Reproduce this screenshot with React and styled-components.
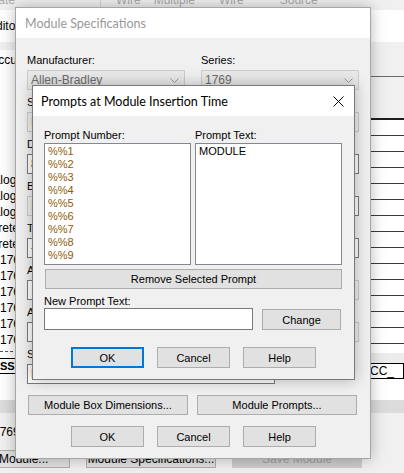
import React from "react";
import styled, { createGlobalStyle } from "styled-components";

const GlobalStyle = createGlobalStyle`
  html, body {
    margin: 0;
    padding: 0;
  }
  body {
    width: 404px;
    height: 473px;
    overflow: hidden;
    background: #f0f0f0;
    font-family: "Liberation Sans", Arial, sans-serif;
    font-size: 11px;
    color: #000;
  }
  * {
    box-sizing: border-box;
  }
`;

/* ---------- the application behind the dialogs ---------- */

const Desk = styled.div`
  position: relative;
  width: 404px;
  height: 473px;
  overflow: hidden;
  display: flex;
  flex-direction: column;
`;

const ColumnHeader = styled.div`
  height: 10px;
  flex: none;
  display: flex;
  overflow: hidden;
  color: #a9a9a9;
  font-size: 12px;
  white-space: nowrap;
`;

const HeaderCell = styled.div`
  flex: none;
  width: ${(p) => (p.$w ? `${p.$w}px` : "auto")};
  margin-left: ${(p) => p.$ml || 0}px;
  line-height: 14px;
  margin-top: -7px;
  border-right: ${(p) => (p.$sep ? "1px solid #d4d4d4" : "none")};
  overflow: hidden;
`;

const TopBand = styled.div`
  height: 32px;
  flex: none;
  background: #fff;
  font-size: 12px;
  line-height: 32px;
  white-space: nowrap;
  overflow: hidden;
`;

const Workspace = styled.div`
  height: 358px;
  flex: none;
  display: flex;
`;

const TreePane = styled.div`
  width: 200px;
  flex: none;
  background: #fff;
  display: flex;
  flex-direction: column;
  white-space: nowrap;
  overflow: hidden;
`;

const TreeHead = styled.div`
  height: 8px;
  background: #f0f0f0;
`;

const TreeRow = styled.div`
  height: 16px;
  line-height: 16px;
  font-size: 12px;
  margin-left: ${(p) => p.$ml || 0}px;
  margin-top: ${(p) => p.$mt || 0}px;
`;

const DashedRow = styled.div`
  height: 8px;
  border-bottom: 1px dashed #555;
  margin-bottom: 6px;
  margin-top: -4px;
`;

const ColumnTitle = styled.div`
  height: 16px;
  line-height: 14px;
  border: 1px solid #000;
  font-size: ${(p) => (p.$bold ? 11 : 12)}px;
  font-weight: ${(p) => (p.$bold ? 700 : 400)};
  padding-left: ${(p) => p.$pl || 0}px;
  margin-left: ${(p) => p.$ml || 0}px;
  background: #fff;
`;

const GridPane = styled.div`
  flex: 1;
  display: flex;
  flex-direction: column;
  background: #fff;
  white-space: nowrap;
`;

const GridTop = styled.div`
  height: 78px;
  background: #f0f0f0;
  border-bottom: 2px solid #1e1e1e;
`;

const GridTopRule = styled.div`
  height: 35px;
  border-bottom: 1px solid #6a6a6a;
`;

const GridRow = styled.div`
  height: 16px;
  border-bottom: 1px solid #3c3c3c;
`;

const GridGap = styled.div`
  height: ${(p) => p.$h}px;
  background: ${(p) => p.$bg || "#fff"};
`;

const StatusBand = styled.div`
  height: 13px;
  flex: none;
  background: #dcdcdc;
`;

const Footer = styled.div`
  flex: 1;
  padding-top: 12px;
  white-space: nowrap;
`;

const FooterText = styled.div`
  line-height: 14px;
  font-size: 12px;
  margin-left: -7px;
`;

const FooterButtons = styled.div`
  display: flex;
  gap: 16px;
  margin-top: 11px;
  margin-left: -50px;
`;

const FooterButton = styled.div`
  width: ${(p) => p.$w || 130}px;
  height: 18px;
  line-height: 16px;
  text-align: center;
  border: 1px solid ${(p) => (p.$disabled ? "#cccccc" : "#adadad")};
  background: ${(p) => (p.$disabled ? "#cccccc" : "#e1e1e1")};
  color: ${(p) => (p.$disabled ? "#a0a0a0" : "#000")};
  font-size: 12px;
`;

/* ---------- dialog windows ---------- */

const Window = styled.div`
  position: absolute;
  left: ${(p) => p.$x}px;
  top: ${(p) => p.$y}px;
  width: ${(p) => p.$w}px;
  height: ${(p) => p.$h}px;
  border: 1px solid ${(p) => (p.$active ? "#7a7a7a" : "#a6a6a6")};
  background: #f0f0f0;
  box-shadow: 0 0 14px rgba(0, 0, 0, 0.28);
  display: flex;
  flex-direction: column;
`;

const TitleBar = styled.div`
  height: 30px;
  flex: none;
  background: #fff;
  display: flex;
  align-items: center;
  justify-content: space-between;
  padding: 0 10px 0 ${(p) => p.$pl}px;
`;

const TitleText = styled.span`
  font-family: Lato, "Liberation Sans", sans-serif;
  font-size: 12.5px;
  color: ${(p) => (p.$active ? "#000" : "#999999")};
`;

const CloseGlyph = () => (
  <svg width="11" height="11" viewBox="0 0 11 11">
    <path d="M0.5 0.5 L10.5 10.5 M10.5 0.5 L0.5 10.5" stroke="#000" strokeWidth="1" />
  </svg>
);

const Chevron = styled.svg`
  position: absolute;
  right: 5px;
  top: 7px;
`;

const WindowBody = styled.div`
  flex: 1;
  padding: ${(p) => p.$pad};
  display: flex;
  flex-direction: column;
`;

/* Module Specifications parts */

const FieldGrid = styled.div`
  display: grid;
  grid-template-columns: 158px 158px;
  column-gap: 16px;
  row-gap: 5px;
`;

const Field = styled.div`
  display: flex;
  flex-direction: column;
  grid-column: ${(p) => (p.$wide ? "1 / span 2" : "auto")};
`;

const FieldLabel = styled.div`
  line-height: 14px;
  height: 14px;
  margin-bottom: ${(p) => (p.$tight ? 0 : 3)}px;
  margin-top: ${(p) => p.$mt || 0}px;
  white-space: nowrap;
`;

const ValueBox = styled.div`
  position: relative;
  width: ${(p) => (p.$w ? `${p.$w}px` : "100%")};
  height: 20px;
  line-height: 18px;
  padding-left: 3px;
  border: 1px solid ${(p) => (p.$disabled ? "#cccccc" : "#7a7a7a")};
  background: ${(p) => (p.$combo ? "#e9e9e9" : p.$disabled ? "#f0f0f0" : "#fff")};
  color: ${(p) => (p.$disabled ? "#6d6d6d" : "#000")};
  white-space: nowrap;
  overflow: hidden;
  font-size: 12px;
`;

const ButtonRow = styled.div`
  display: flex;
  justify-content: ${(p) => p.$justify || "flex-start"};
  gap: ${(p) => p.$gap}px;
  margin-top: ${(p) => p.$mt}px;
  margin-left: ${(p) => p.$ml || 0}px;
`;

const PushButton = styled.div`
  width: ${(p) => p.$w}px;
  height: ${(p) => p.$h || 21}px;
  flex: none;
  display: flex;
  align-items: center;
  justify-content: center;
  margin-top: ${(p) => p.$mt || 0}px;
  background: #e1e1e1;
  border: ${(p) => (p.$default ? "2px solid #0078d7" : "1px solid #adadad")};
  font-size: 11px;
  white-space: nowrap;
`;

/* Prompts dialog parts */

const ListGrid = styled.div`
  display: grid;
  grid-template-columns: 147px 147px;
  column-gap: 4px;
`;

const ListColumn = styled.div`
  display: flex;
  flex-direction: column;
`;

const ListBox = styled.div`
  height: 122px;
  margin-top: 1px;
  border: 1px solid #828790;
  background: #fff;
  padding: 1px 3px;
`;

const ListItem = styled.div`
  line-height: 13px;
  font-size: 11px;
  color: ${(p) => p.$color || "#000"};
`;

const InputRow = styled.div`
  display: flex;
  align-items: flex-start;
  gap: 9px;
`;

const TextInput = styled.div`
  width: 209px;
  height: 22px;
  border: 1px solid #7a7a7a;
  background: #fff;
`;

const specFields = [
  { label: "Short Name:", value: "DI", disabled: true },
  { label: "Catalog Number:", value: "", disabled: true },
  { label: "Description:", value: "8 Channel Analog Input" },
  { label: "Revision:", value: "" },
  { label: "Bus Type:", value: "I/O", disabled: true },
  { label: "Slot Type:", value: "" },
  { label: "Type:", value: "-" },
  { label: "Class:", value: "" },
  { label: "Address Format:", value: "" },
  { label: "Input Size:", value: "", disabled: true },
  { label: "Alias:", value: "" },
  { label: "Output Size:", value: "", disabled: true },
];

const prompts = ["%%1", "%%2", "%%3", "%%4", "%%5", "%%6", "%%7", "%%8", "%%9"];

const treeRows = [
  { text: "Analog Input", ml: -21 },
  { text: "Analog Output", ml: -21 },
  { text: "Analog Combo", ml: -21 },
  { text: "Discrete Input", ml: -25 },
  { text: "Discrete Output", ml: -25 },
  { text: "1769-IF4", ml: 0 },
  { text: "1769-IF8", ml: 0 },
  { text: "1769-OF4", ml: 0 },
  { text: "1769-OF8", ml: 0 },
  { text: "1769-IQ16", ml: 0 },
  { text: "1769-OB16", ml: 0 },
];

const ComboChevron = () => (
  <Chevron width="9" height="5" viewBox="0 0 9 5">
    <path d="M0.5 0.5 L4.5 4.5 L8.5 0.5" fill="none" stroke="#9a9a9a" strokeWidth="1" />
  </Chevron>
);

const App = () => {
  return (
    <>
      <GlobalStyle />
      <Desk>
        <ColumnHeader>
          <HeaderCell $w={101} $sep>
            <span style={{ marginLeft: -13 }}>State</span>
          </HeaderCell>
          <HeaderCell $ml={15}>Wire</HeaderCell>
          <HeaderCell $ml={13}>Multiple</HeaderCell>
          <HeaderCell $ml={24}>Wire</HeaderCell>
          <HeaderCell $ml={36}>Source</HeaderCell>
        </ColumnHeader>
        <TopBand>
          <span style={{ marginLeft: -12 }}>Editor</span>
        </TopBand>
        <Workspace>
          <TreePane>
            <TreeHead />
            <TreeRow $ml={-11} $mt={2}>
              Occurrences
            </TreeRow>
            <TreeRow $mt={104} $ml={treeRows[0].ml}>
              {treeRows[0].text}
            </TreeRow>
            {treeRows.slice(1).map((r) => (
              <TreeRow key={r.text} $ml={r.ml}>
                {r.text}
              </TreeRow>
            ))}
            <DashedRow />
            <ColumnTitle $bold $ml={-9}>
              ASSY
            </ColumnTitle>
          </TreePane>
          <GridPane>
            <GridTop>
              <GridTopRule />
            </GridTop>
            {Array.from({ length: 14 }).map((_, i) => (
              <GridRow key={i} />
            ))}
            <GridGap $h={9} />
            <GridGap $h={10} $bg="#ececec" />
            <ColumnTitle $pl={169}>CC_</ColumnTitle>
          </GridPane>
        </Workspace>
        <StatusBand />
        <Footer>
          <FooterText>1769-IF8</FooterText>
          <FooterButtons>
            <FooterButton $w={120}>New Module...</FooterButton>
            <FooterButton>Module Specifications...</FooterButton>
            <FooterButton $disabled>Save Module</FooterButton>
          </FooterButtons>
        </Footer>

        <Window $x={15} $y={7} $w={356} $h={452}>
          <TitleBar $pl={9}>
            <TitleText>Module Specifications</TitleText>
          </TitleBar>
          <WindowBody $pad="15px 10px 0 11px">
            <FieldGrid>
              <Field>
                <FieldLabel>Manufacturer:</FieldLabel>
                <ValueBox $combo $disabled>
                  Allen-Bradley
                  <ComboChevron />
                </ValueBox>
              </Field>
              <Field>
                <FieldLabel>Series:</FieldLabel>
                <ValueBox $combo $disabled>
                  1769
                  <ComboChevron />
                </ValueBox>
              </Field>
              {specFields.map((f) => (
                <Field key={f.label}>
                  <FieldLabel>{f.label}</FieldLabel>
                  <ValueBox $disabled={f.disabled}>{f.value}</ValueBox>
                </Field>
              ))}
              <Field $wide>
                <FieldLabel>Slot Symbol:</FieldLabel>
                <ValueBox $w={248}>F</ValueBox>
              </Field>
            </FieldGrid>
            <ButtonRow $gap={9} $mt={11} $ml={1}>
              <PushButton $w={160} $h={20}>
                Module Box Dimensions...
              </PushButton>
              <PushButton $w={160} $h={20}>
                Module Prompts...
              </PushButton>
            </ButtonRow>
            <ButtonRow $gap={13} $mt={11} $justify="center">
              <PushButton $w={73}>OK</PushButton>
              <PushButton $w={73}>Cancel</PushButton>
              <PushButton $w={73}>Help</PushButton>
            </ButtonRow>
          </WindowBody>
        </Window>

        <Window $x={32} $y={85} $w={323} $h={295} $active>
          <TitleBar $pl={8}>
            <TitleText $active>Prompts at Module Insertion Time</TitleText>
            <CloseGlyph />
          </TitleBar>
          <WindowBody $pad="12px 11px 0 11px">
            <ListGrid>
              <ListColumn>
                <FieldLabel $tight>Prompt Number:</FieldLabel>
                <ListBox>
                  {prompts.map((p) => (
                    <ListItem key={p} $color="#8f5c08">
                      {p}
                    </ListItem>
                  ))}
                </ListBox>
              </ListColumn>
              <ListColumn>
                <FieldLabel $tight>Prompt Text:</FieldLabel>
                <ListBox>
                  <ListItem>MODULE</ListItem>
                </ListBox>
              </ListColumn>
            </ListGrid>
            <ButtonRow $gap={0} $mt={4} $ml={1}>
              <PushButton $w={297} $h={20}>
                Remove Selected Prompt
              </PushButton>
            </ButtonRow>
            <FieldLabel $tight $mt={5}>
              New Prompt Text:
            </FieldLabel>
            <InputRow>
              <TextInput />
              <PushButton $w={79} $mt={1}>
                Change
              </PushButton>
            </InputRow>
            <ButtonRow $gap={13} $mt={17} $justify="center">
              <PushButton $w={73} $default>
                OK
              </PushButton>
              <PushButton $w={73}>Cancel</PushButton>
              <PushButton $w={73}>Help</PushButton>
            </ButtonRow>
          </WindowBody>
        </Window>
      </Desk>
    </>
  );
};

export default App;
